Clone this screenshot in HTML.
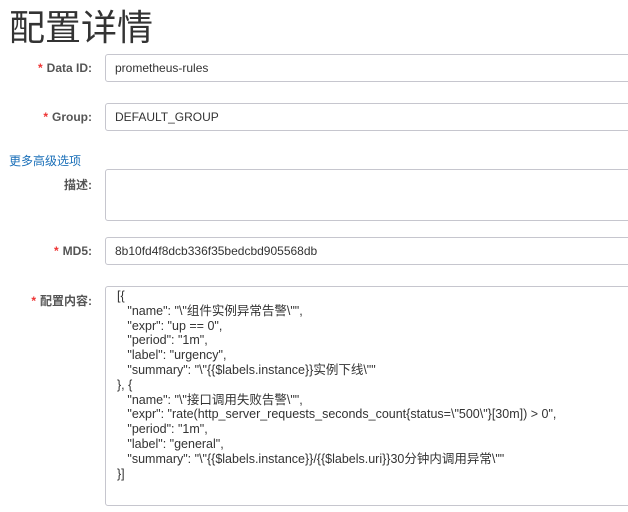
<!DOCTYPE html>
<html><head><meta charset="utf-8"><style>
body{margin:0;width:628px;height:512px;overflow:hidden;background:#fff;font-family:"Liberation Sans","Noto Sans CJK SC",sans-serif;color:#333;position:relative}
.t{position:absolute;left:9px;top:4px;font-size:36px;line-height:48px;color:#333;font-family:"Liberation Sans","Noto Sans CJK SC",sans-serif}
.l{position:absolute;right:536px;font-size:12px;font-weight:bold;color:#555;white-space:nowrap}
.l b{color:#e33;font-weight:bold;margin-right:4px}
.i{position:absolute;left:105px;width:600px;border:1px solid #c6c6ce;border-radius:3px;box-sizing:border-box;font-size:12px;padding-left:9px;white-space:pre;color:#333}
.a{position:absolute;left:9px;top:152px;font-size:12px;color:#1a6fb8}
</style></head><body>
<div class="t">配置详情</div>
<div class="l" style="top:61px"><b>*</b>Data ID:</div>
<div class="i" style="top:54px;height:28px;line-height:26px">prometheus-rules</div>
<div class="l" style="top:110px"><b>*</b>Group:</div>
<div class="i" style="top:103px;height:28px;line-height:26px">DEFAULT_GROUP</div>
<div class="a">更多高级选项</div>
<div class="l" style="top:176px">描述:</div>
<div class="i" style="top:169px;height:52px"></div>
<div class="l" style="top:244px"><b>*</b>MD5:</div>
<div class="i" style="top:237px;height:28px;line-height:26px">8b10fd4f8dcb336f35bedcbd905568db</div>
<div class="l" style="top:292px"><b>*</b>配置内容:</div>
<div class="i" style="top:286px;height:220px;padding-top:2px;padding-left:11px;line-height:14.8px;font-size:12.5px">[{
   "name": "\"组件实例异常告警\"",
   "expr": "up == 0",
   "period": "1m",
   "label": "urgency",
   "summary": "\"{{$labels.instance}}实例下线\""
}, {
   "name": "\"接口调用失败告警\"",
   "expr": "rate(http_server_requests_seconds_count{status=\"500\"}[30m]) > 0",
   "period": "1m",
   "label": "general",
   "summary": "\"{{$labels.instance}}/{{$labels.uri}}30分钟内调用异常\""
}]</div>
</body></html>
